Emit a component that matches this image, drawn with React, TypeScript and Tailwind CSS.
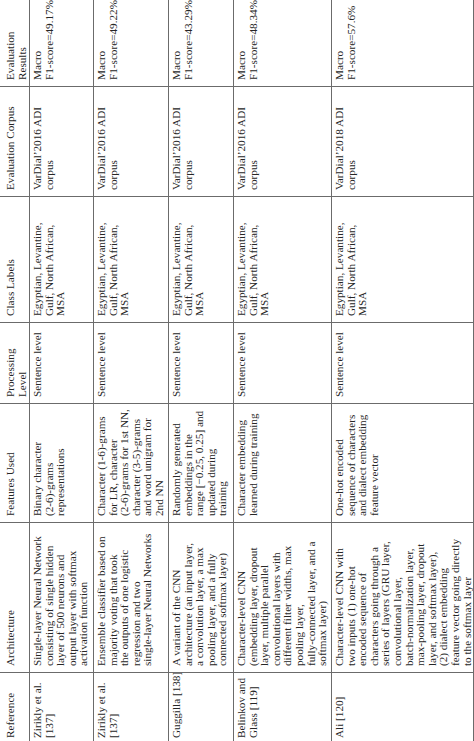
import React from "react";

// Rotated results table (the page is a landscape table turned 90° counter-clockwise)

const EGY = ["Egyptian, Levantine,", "Gulf, North African,", "MSA"];

const rows: string[][][] = [
  [
    ["Reference"],
    ["Architecture"],
    ["Features Used"],
    ["Processing", "Level"],
    ["Class Labels"],
    ["Evaluation Corpus"],
    ["Evaluation", "Results"],
  ],
  [
    ["Zirikly et al.", "[137]"],
    [
      "Single-layer Neural Network",
      "consisting of single hidden",
      "layer of 500 neurons and",
      "output layer with softmax",
      "activation function",
    ],
    ["Binary character", "(2-6)-grams", "representations"],
    ["Sentence level"],
    EGY,
    ["VarDial’2016 ADI", "corpus"],
    ["Macro", "F1-score=49.17%"],
  ],
  [
    ["Zirikly et al.", "[137]"],
    [
      "Ensemble classifier based on",
      "majority voting that took",
      "the outputs of one logistic",
      "regression and two",
      "single-layer Neural Networks",
    ],
    [
      "Character (1-6)-grams",
      "for LR, character",
      "(2-6)-grams for 1st NN,",
      "character (3-5)-grams",
      "and word unigram for",
      "2nd NN",
    ],
    ["Sentence level"],
    EGY,
    ["VarDial’2016 ADI", "corpus"],
    ["Macro", "F1-score=49.22%"],
  ],
  [
    ["Guggilla [138]"],
    [
      "A variant of the CNN",
      "architecture (an input layer,",
      "a convolution layer, a max",
      "pooling layer, and a fully",
      "connected softmax layer)",
    ],
    [
      "Randomly generated",
      "embeddings in the",
      "range [−0.25, 0.25] and",
      "updated during",
      "training",
    ],
    ["Sentence level"],
    EGY,
    ["VarDial’2016 ADI", "corpus"],
    ["Macro", "F1-score=43.29%"],
  ],
  [
    ["Belinkov and", "Glass [119]"],
    [
      "Character-level CNN",
      "(embedding layer, dropout",
      "layer, multiple parallel",
      "convolutional layers with",
      "different filter widths, max",
      "pooling layer,",
      "fully-connected layer, and a",
      "softmax layer)",
    ],
    ["Character embedding", "learned during training"],
    ["Sentence level"],
    EGY,
    ["VarDial’2016 ADI", "corpus"],
    ["Macro", "F1-score=48.34%"],
  ],
  [
    ["Ali [120]"],
    [
      "Character-level CNN with",
      "two inputs (1) one-hot",
      "encoded sequence of",
      "characters going through a",
      "series of layers (GRU layer,",
      "convolutional layer,",
      "batch-normalization layer,",
      "max-pooling layer, dropout",
      "layer, and softmax layer),",
      "(2) dialect embedding",
      "feature vector going directly",
      "to the softmax layer",
    ],
    [
      "One-hot encoded",
      "sequence of characters",
      "and dialect embedding",
      "feature vector",
    ],
    ["Sentence level"],
    EGY,
    ["VarDial’2018 ADI", "corpus"],
    ["Macro", "F1-score=57.6%"],
  ],
];

function Cell({ lines, row, col }: { lines: string[]; row: number; col: number }) {
  return (
    <div
      className={`overflow-hidden whitespace-nowrap border-b border-[#6b6b6b] ${
        col > 0 ? "border-l pl-[6px]" : "pl-[3px]"
      } ${row === 0 ? "pt-[5px]" : "pt-[2px]"}`}
    >
      {lines.map((l, i) => (
        <div key={i}>{l}</div>
      ))}
    </div>
  );
}

export default function App() {
  return (
    <div className="h-[741px] w-[474px] overflow-hidden bg-white">
      <div className="h-[474px] w-[741px] origin-top-left translate-y-[741px] -rotate-90 overflow-hidden font-['Liberation_Serif','DejaVu_Serif',serif] text-[11.2px] leading-[11.6px] text-[#262626]">
        <div className="grid w-[804px] grid-cols-[68px_150px_119px_81px_126px_110px_150px] grid-rows-[30px_64px_75px_65px_98px_142px]">
          {rows.map((r, ri) => r.map((lines, ci) => <Cell key={`${ri}-${ci}`} lines={lines} row={ri} col={ci} />))}
        </div>
      </div>
    </div>
  );
}
